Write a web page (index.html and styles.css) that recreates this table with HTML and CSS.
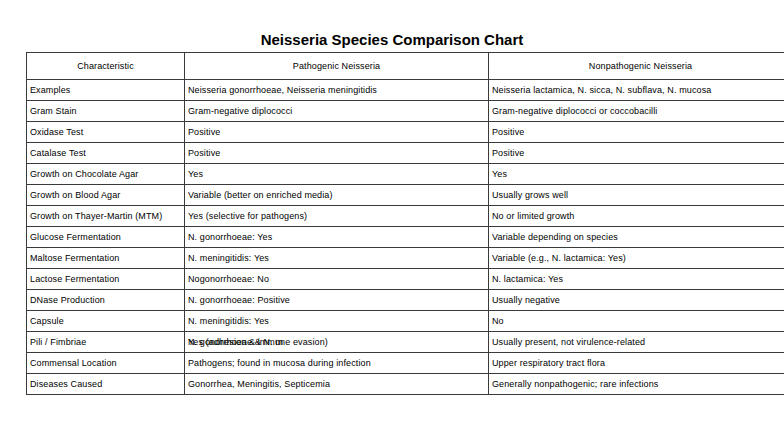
FILE: index.html
```html
<!DOCTYPE html>
<html>
<head>
<meta charset="utf-8">
<link rel="stylesheet" href="styles.css">
</head>
<body>
<div class="page">
  <h1 class="title">Neisseria Species Comparison Chart</h1>
  <table class="chart">
    <colgroup>
      <col class="c1"><col class="c2"><col class="c3">
    </colgroup>
    <thead>
      <tr><th>Characteristic</th><th>Pathogenic Neisseria</th><th>Nonpathogenic Neisseria</th></tr>
    </thead>
    <tbody>
      <tr><td>Examples</td><td>Neisseria gonorrhoeae, Neisseria meningitidis</td><td>Neisseria lactamica, N. sicca, N. subflava, N. mucosa</td></tr>
      <tr><td>Gram Stain</td><td>Gram-negative diplococci</td><td>Gram-negative diplococci or coccobacilli</td></tr>
      <tr><td>Oxidase Test</td><td>Positive</td><td>Positive</td></tr>
      <tr><td>Catalase Test</td><td>Positive</td><td>Positive</td></tr>
      <tr><td>Growth on Chocolate Agar</td><td>Yes</td><td>Yes</td></tr>
      <tr><td>Growth on Blood Agar</td><td>Variable (better on enriched media)</td><td>Usually grows well</td></tr>
      <tr><td>Growth on Thayer-Martin (MTM)</td><td>Yes (selective for pathogens)</td><td>No or limited growth</td></tr>
      <tr><td>Glucose Fermentation</td><td>N. gonorrhoeae: Yes</td><td>Variable depending on species</td></tr>
      <tr><td>Maltose Fermentation</td><td>N. meningitidis: Yes</td><td>Variable (e.g., N. lactamica: Yes)</td></tr>
      <tr><td>Lactose Fermentation</td><td>Nogonorrhoeae: No</td><td>N. lactamica: Yes</td></tr>
      <tr><td>DNase Production</td><td>N. gonorrhoeae: Positive</td><td>Usually negative</td></tr>
      <tr><td>Capsule</td><td>N. meningitidis: Yes</td><td>No</td></tr>
      <tr><td>Pili / Fimbriae</td><td><span class="stack"><span>Yes (adhesion &amp; immune evasion)</span><span class="over">N. gonorrhoeae &amp; N. m</span></span></td><td>Usually present, not virulence-related</td></tr>
      <tr><td>Commensal Location</td><td>Pathogens; found in mucosa during infection</td><td>Upper respiratory tract flora</td></tr>
      <tr><td>Diseases Caused</td><td>Gonorrhea, Meningitis, Septicemia</td><td>Generally nonpathogenic; rare infections</td></tr>
    </tbody>
  </table>
</div>
</body>
</html>
```

FILE: styles.css
```css
html, body {
  margin: 0;
  padding: 0;
  overflow: hidden;
  background: #fff;
}
body {
  font-family: "Liberation Sans", Arial, sans-serif;
  color: #000;
}
.page {
  width: 784px;
  padding-top: 30px;
}
.title {
  margin: 0 0 2px 0;
  font-size: 15px;
  line-height: 20px;
  font-weight: bold;
  text-align: center;
}
.chart {
  border-collapse: collapse;
  margin-left: 26px;
  width: 766px;
  table-layout: fixed;
  font-size: 9px;
  letter-spacing: 0.12px;
}
.c1 { width: 158px; }
.c2 { width: 304px; }
.c3 { width: 304px; }
.chart th, .chart td {
  border: 1px solid #3a3a3a;
  padding: 0 3px;
  white-space: nowrap;
  overflow: hidden;
}
.chart th {
  height: 26px;
  font-weight: normal;
  text-align: center;
}
.chart td {
  height: 20px;
  text-align: left;
}
.stack {
  position: relative;
  display: inline-block;
}
.over {
  position: absolute;
  left: 0;
  top: 0;
}
```
